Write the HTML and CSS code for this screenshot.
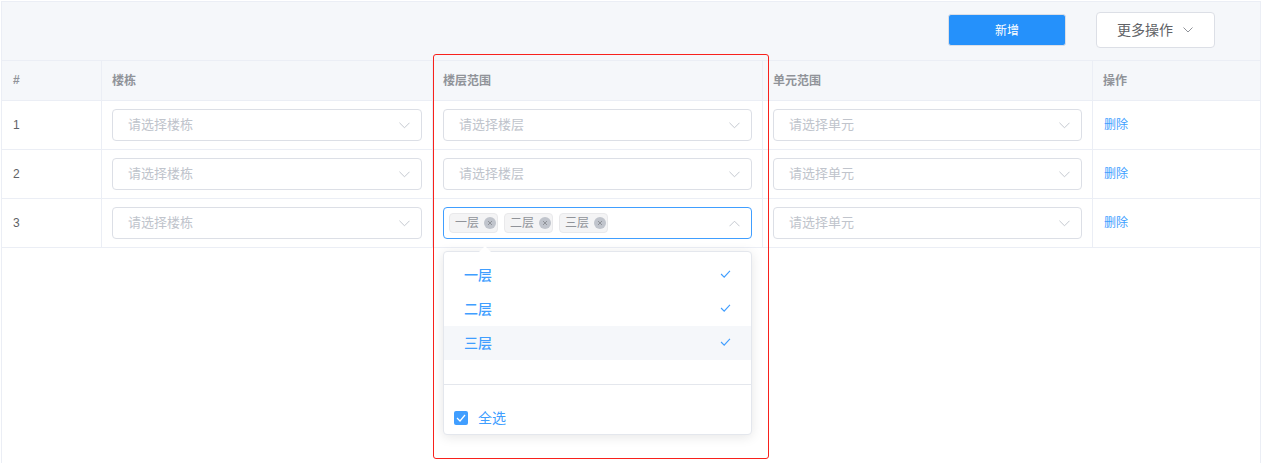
FILE: index.html
```html
<!DOCTYPE html>
<html lang="zh-CN">
  <head>
    <meta charset="UTF-8" />
    <meta name="viewport" content="width=device-width, initial-scale=1.0" />
    <title>楼层范围</title>
    <link rel="stylesheet" href="styles.css">
  </head>
  <body>
    <div class="page">
      <div class="toolbar">
        <button class="btn-primary">新增</button>
        <button class="btn-more">
          <span>更多操作</span>
          <svg class="arrow" width="10" height="6" viewBox="0 0 10 6"><path d="M0.5 0.5L5 5L9.5 0.5" /></svg>
        </button>
      </div>

      <div class="row head">
        <div class="cell">#</div>
        <div class="cell">楼栋</div>
        <div class="cell">楼层范围</div>
        <div class="cell">单元范围</div>
        <div class="cell">操作</div>
      </div>

      <div class="row">
        <div class="cell num">1</div>
        <div class="cell"><div class="select"><span>请选择楼栋</span><svg class="chevron" width="11" height="7" viewBox="0 0 12 7"><path d="M0.5 0.5L6 6L11.5 0.5" /></svg></div></div>
        <div class="cell"><div class="select"><span>请选择楼层</span><svg class="chevron" width="11" height="7" viewBox="0 0 12 7"><path d="M0.5 0.5L6 6L11.5 0.5" /></svg></div></div>
        <div class="cell"><div class="select"><span>请选择单元</span><svg class="chevron" width="11" height="7" viewBox="0 0 12 7"><path d="M0.5 0.5L6 6L11.5 0.5" /></svg></div></div>
        <div class="cell"><a class="link">删除</a></div>
      </div>

      <div class="row">
        <div class="cell num">2</div>
        <div class="cell"><div class="select"><span>请选择楼栋</span><svg class="chevron" width="11" height="7" viewBox="0 0 12 7"><path d="M0.5 0.5L6 6L11.5 0.5" /></svg></div></div>
        <div class="cell"><div class="select"><span>请选择楼层</span><svg class="chevron" width="11" height="7" viewBox="0 0 12 7"><path d="M0.5 0.5L6 6L11.5 0.5" /></svg></div></div>
        <div class="cell"><div class="select"><span>请选择单元</span><svg class="chevron" width="11" height="7" viewBox="0 0 12 7"><path d="M0.5 0.5L6 6L11.5 0.5" /></svg></div></div>
        <div class="cell"><a class="link">删除</a></div>
      </div>

      <div class="row">
        <div class="cell num">3</div>
        <div class="cell"><div class="select"><span>请选择楼栋</span><svg class="chevron" width="11" height="7" viewBox="0 0 12 7"><path d="M0.5 0.5L6 6L11.5 0.5" /></svg></div></div>
        <div class="cell floor-cell">
          <div class="select open">
            <div class="tags">
              <span class="tag"><span class="tag-text">一层</span><i class="tag-close"><svg width="6" height="6" viewBox="0 0 6 6"><path d="M1 1L5 5M5 1L1 5" /></svg></i></span>
              <span class="tag"><span class="tag-text">二层</span><i class="tag-close"><svg width="6" height="6" viewBox="0 0 6 6"><path d="M1 1L5 5M5 1L1 5" /></svg></i></span>
              <span class="tag"><span class="tag-text">三层</span><i class="tag-close"><svg width="6" height="6" viewBox="0 0 6 6"><path d="M1 1L5 5M5 1L1 5" /></svg></i></span>
            </div>
            <svg class="chevron" width="11" height="7" viewBox="0 0 12 7"><path d="M0.5 6.5L6 1L11.5 6.5" /></svg>
          </div>

          <div class="dropdown">
            <div class="dropdown-arrow"></div>
            <ul class="options">
              <li>一层<svg class="check" width="11" height="8" viewBox="0 0 12 9"><path d="M1 4.5L4.5 8L11 1" /></svg></li>
              <li>二层<svg class="check" width="11" height="8" viewBox="0 0 12 9"><path d="M1 4.5L4.5 8L11 1" /></svg></li>
              <li class="hover">三层<svg class="check" width="11" height="8" viewBox="0 0 12 9"><path d="M1 4.5L4.5 8L11 1" /></svg></li>
            </ul>
            <div class="dropdown-footer">
              <span class="checkbox"><svg width="10" height="8" viewBox="0 0 10 8"><path d="M1 4L4 7L9 1" /></svg></span>
              <span class="check-all">全选</span>
            </div>
          </div>
        </div>
        <div class="cell"><div class="select"><span>请选择单元</span><svg class="chevron" width="11" height="7" viewBox="0 0 12 7"><path d="M0.5 0.5L6 6L11.5 0.5" /></svg></div></div>
        <div class="cell"><a class="link">删除</a></div>
      </div>

      <div class="highlight"></div>
    </div>
  </body>
</html>
```

FILE: styles.css
```css
html, body {
  margin: 0;
  padding: 0;
  height: 100%;
  overflow: hidden;
  background-color: #fff;
}
body {
  font-family: "Liberation Sans", "Noto Sans CJK SC", sans-serif;
  font-size: 12px;
  color: #606266;
}
.page {
  position: relative;
  box-sizing: border-box;
  width: 1260px;
  height: 462px;
  margin: 1px 0 0 1px;
  border-left: 1px solid #ebeef5;
  border-right: 1px solid #ebeef5;
  border-top: 1px solid #ebeef5;
}
.toolbar {
  display: flex;
  align-items: center;
  justify-content: flex-end;
  box-sizing: border-box;
  height: 59px;
  padding-right: 45px;
  padding-bottom: 2px;
  background-color: #f5f7fa;
  border-bottom: 1px solid #ebeef5;
}
.btn-primary {
  width: 118px;
  height: 32px;
  margin-right: 30px;
  padding: 0 0 2px;
  border: 1px solid #dcdfe6;
  border-radius: 3px;
  background-color: #2591fb;
  color: #fff;
  font: inherit;
  font-size: 12px;
}
.btn-more {
  display: flex;
  align-items: center;
  justify-content: center;
  gap: 10px;
  width: 119px;
  height: 36px;
  padding: 0 1px 0 0;
  border: 1px solid #dcdfe6;
  border-radius: 4px;
  background-color: #fff;
  color: #606266;
  font: inherit;
  font-size: 14px;
}
.btn-more span {
  padding-bottom: 2px;
}
.arrow path, .chevron path {
  fill: none;
  stroke: #909399;
  stroke-width: 1;
}
.row {
  display: grid;
  grid-template-columns: 100px 331px 330px 330px 1fr;
  box-sizing: border-box;
  height: 49px;
  border-bottom: 1px solid #ebeef5;
}
.row.head {
  height: 40px;
  background-color: #f5f7fa;
  color: #909399;
  font-weight: bold;
}
.cell {
  display: flex;
  align-items: center;
  box-sizing: border-box;
  min-width: 0;
  padding: 0 10px;
  border-right: 1px solid #ebeef5;
}
.row.head .cell {
  padding-bottom: 2px;
}
.cell:first-child {
  padding-left: 11px;
}
.cell:last-child {
  border-right: none;
}
.select {
  display: flex;
  align-items: center;
  justify-content: space-between;
  box-sizing: border-box;
  width: 100%;
  height: 32px;
  padding: 0 11px 0 15px;
  border: 1px solid #dcdfe6;
  border-radius: 4px;
  background-color: #fff;
  color: #c0c4cc;
  font-size: 13px;
}
.select > span {
  padding-bottom: 4px;
}
.chevron path {
  stroke: #c0c4cc;
}
.select.open {
  padding-left: 5px;
  border-color: #409eff;
}
.tags {
  display: flex;
  gap: 6px;
}
.tag {
  display: flex;
  align-items: center;
  gap: 5px;
  box-sizing: border-box;
  height: 20px;
  padding: 0 1px 0 5px;
  border: 1px solid #e9e9eb;
  border-radius: 4px;
  background-color: #f4f4f5;
  color: #909399;
  font-size: 12px;
}
.tag-text {
  padding-bottom: 3px;
}
.tag-close {
  display: flex;
  align-items: center;
  justify-content: center;
  width: 12px;
  height: 12px;
  border-radius: 50%;
  background-color: #c0c4cc;
}
.tag-close path {
  fill: none;
  stroke: #909399;
  stroke-width: 1;
}
.link {
  padding: 0 0 3px 1px;
  color: #409eff;
}
.floor-cell {
  position: relative;
}
.dropdown {
  position: absolute;
  z-index: 10;
  top: 52px;
  left: 10px;
  box-sizing: border-box;
  width: 309px;
  height: 184px;
  border: 1px solid #e4e7ed;
  border-radius: 4px;
  background-color: #fff;
  box-shadow: 0 2px 12px rgba(0, 0, 0, 0.1);
}
.dropdown-arrow {
  position: absolute;
  top: -6px;
  left: 35px;
  width: 0;
  height: 0;
  border-left: 6px solid transparent;
  border-right: 6px solid transparent;
  border-bottom: 6px solid #fff;
}
.options {
  list-style: none;
  margin: 0;
  padding: 6px 0 0;
}
.options li {
  display: flex;
  align-items: center;
  justify-content: space-between;
  box-sizing: border-box;
  height: 34px;
  padding: 0 20px 2px 20px;
  color: #409eff;
  font-size: 14px;
  font-weight: 500;
}
.options li.hover {
  background-color: #f5f7fa;
}
.check path {
  fill: none;
  stroke: #409eff;
  stroke-width: 1.3;
}
.dropdown-footer {
  display: flex;
  align-items: center;
  gap: 10px;
  box-sizing: border-box;
  height: 50px;
  margin-top: 24px;
  padding: 16px 0 0 10px;
  border-top: 1px solid #e4e7ed;
  color: #409eff;
  font-size: 14px;
}
.check-all {
  padding-bottom: 2px;
}
.checkbox {
  display: flex;
  align-items: center;
  justify-content: center;
  width: 14px;
  height: 14px;
  border-radius: 2px;
  background-color: #409eff;
}
.checkbox path {
  fill: none;
  stroke: #fff;
  stroke-width: 1.2;
}
.highlight {
  position: absolute;
  z-index: 20;
  top: 52px;
  left: 431px;
  box-sizing: border-box;
  width: 336px;
  height: 405px;
  border: 1px solid #f8211c;
  border-radius: 3px;
  pointer-events: none;
}
```
